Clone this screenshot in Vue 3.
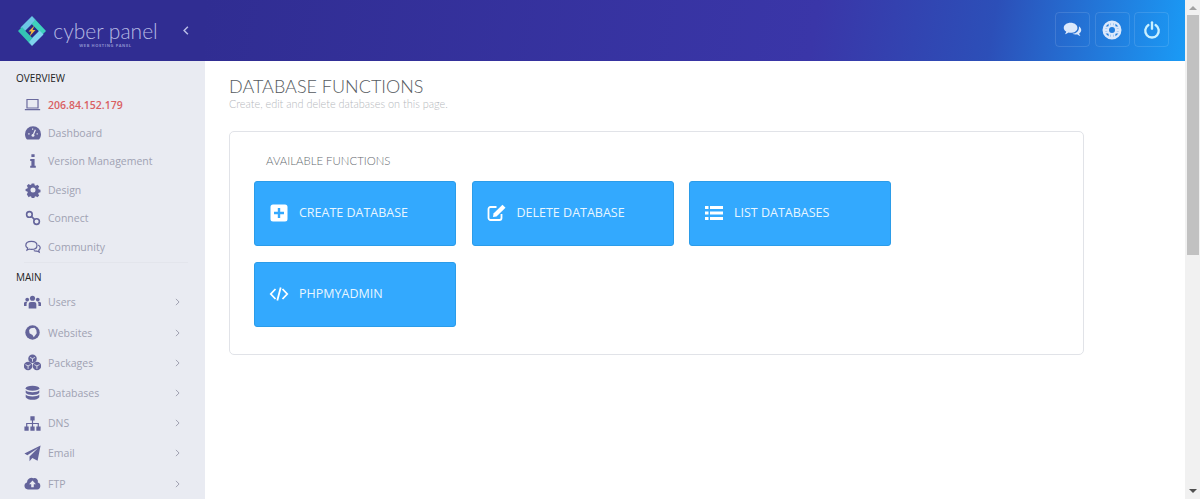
<script setup>
const overview = [
  { label: 'Dashboard', icon: 'gauge' },
  { label: 'Version Management', icon: 'info' },
  { label: 'Design', icon: 'cog' },
  { label: 'Connect', icon: 'link' },
  { label: 'Community', icon: 'comments' },
];
const mainMenu = [
  { label: 'Users', icon: 'users' },
  { label: 'Websites', icon: 'globe' },
  { label: 'Packages', icon: 'cubes' },
  { label: 'Databases', icon: 'database' },
  { label: 'DNS', icon: 'sitemap' },
  { label: 'Email', icon: 'plane' },
  { label: 'FTP', icon: 'cloud' },
];
const functions = [
  { label: 'CREATE DATABASE', icon: 'plus' },
  { label: 'DELETE DATABASE', icon: 'edit' },
  { label: 'LIST DATABASES', icon: 'list' },
  { label: 'PHPMYADMIN', icon: 'code' },
];
</script>

<template>
  <div class="page">
    <div class="app">
      <aside class="sidebar">
        <div class="logo-bar">
          <svg class="logo" viewBox="0 0 30 32" width="30" height="32">
            <path d="M15 1 3.500 12.500 7.500 16.500 15 9 18.500 5Z" fill="#6cc6e6" />
            <path d="M15 1 29 16 25 20 14.500 9 18 5Z" fill="#3fd0bd" />
            <path d="M15 31 26.500 19.500 22.500 15.500 15 23 11.500 27Z" fill="#7fd4ee" />
            <path d="M15 31 1 16 5 12 15.500 23 12 27Z" fill="#34c4b4" />
            <path d="M15 9.500 21.500 16 15 22.500 8.500 16Z" fill="#2a2a84" />
            <path d="M17.500 10.500 11.500 16.500H14.500L12.500 21.500 18.500 15H15.500Z" fill="#f3bb3e" />
          </svg>
          <div class="brand">
            <span class="brand-name">cyber panel</span>
            <span class="brand-sub">WEB HOSTING PANEL</span>
          </div>
          <svg class="collapse" viewBox="0 0 8 12" width="6" height="9">
            <path d="M6.500 1 1.500 6l5 5" fill="none" stroke="#b9bde6" stroke-width="2" />
          </svg>
        </div>

        <h6 class="section">OVERVIEW</h6>
        <a class="item ip">
          <span class="icon">
            <svg viewBox="0 0 20 16" width="17" height="14">
              <path d="M3.500 1.500h13v10h-13zM1 13.500h18" fill="none" stroke="#6a6a9e" stroke-width="1.400" />
            </svg>
          </span>
          <span class="ip-text">206.84.152.179</span>
        </a>
        <a v-for="row in overview" :key="row.label" class="item">
          <span class="icon">
            <svg viewBox="0 0 20 20" width="16" height="16" fill="#64649b">
              <template v-if="row.icon === 'gauge'">
                <path d="M10 1.500a10 10 0 0 0-10 10c0 2.500 1 5 2.500 6.500h15c1.500-1.500 2.500-4 2.500-6.500a10 10 0 0 0-10-10Z" />
                <path d="M10.500 12 13 6M4 11h1.800M14.500 11H16M9.500 4.500v1.500" stroke="#e9ebf2" stroke-width="1.500" />
                <circle cx="10" cy="13" r="1.800" fill="#e9ebf2" />
              </template>
              <template v-else-if="row.icon === 'info'">
                <path d="M8 1.500h4v3.500H8zM6.500 7.500H12V16h1.500v2.500h-7V16H8v-6H6.500z" />
              </template>
              <template v-else-if="row.icon === 'cog'">
                <path fill-rule="evenodd" d="M8.200 1h3.600l.5 2.500 1.600.7 2.200-1.400 2.500 2.500-1.400 2.200.7 1.600 2.500.5v3.600l-2.500.5-.7 1.600 1.400 2.200-2.500 2.500-2.200-1.400-1.600.7-.5 2.500H8.200l-.5-2.500-1.600-.7-2.200 1.400L1.400 15.800l1.400-2.200-.7-1.600L-.3 11.500V8.500l2.400-.5.7-1.600-1.400-2.200L3.900 1.700l2.200 1.400 1.600-.7ZM10 6.500a3.500 3.500 0 1 0 0 7 3.500 3.500 0 0 0 0-7Z" transform="translate(1 1) scale(.9)" />
              </template>
              <template v-else-if="row.icon === 'link'">
                <g fill="none" stroke="#64649b" stroke-width="2">
                  <circle cx="5.500" cy="5.500" r="3.500" />
                  <circle cx="14.500" cy="14.500" r="3.500" />
                  <path d="M8 8l4 4" />
                </g>
              </template>
              <template v-else-if="row.icon === 'comments'">
                <g fill="none" stroke="#64649b" stroke-width="1.500">
                  <path d="M8 3c4 0 7 2 7 5s-3 5-7 5c-1 0-2 0-2.800-.4L2.500 14l.8-2.800C1.800 10.300 1 9.200 1 8c0-3 3-5 7-5Z" />
                  <path d="M16.500 7.500C18.300 8.400 19 9.600 19 11c0 1.200-.7 2.200-1.800 3l.6 2.500-2.800-1.400c-1.500.2-3-.1-4-.8" />
                </g>
              </template>
            </svg>
          </span>
          <span class="item-label">{{ row.label }}</span>
        </a>
        <div class="divider"></div>

        <h6 class="section main-title">MAIN</h6>
        <a v-for="row in mainMenu" :key="row.label" class="item sub">
          <span class="icon">
            <svg viewBox="0 0 20 20" width="17" height="17" fill="#64649b">
              <template v-if="row.icon === 'users'">
                <circle cx="10" cy="5" r="3" />
                <circle cx="3.800" cy="6.500" r="2.200" />
                <circle cx="16.200" cy="6.500" r="2.200" />
                <path d="M5.500 17v-5c0-1.500 1-2.500 2.500-2.500h4c1.500 0 2.500 1 2.500 2.500v5zM0 14v-3c0-1 .8-2 2-2h2c-.8.800-1 1.800-1 3v2zM20 14v-3c0-1-.8-2-2-2h-2c.8.800 1 1.800 1 3v2z" />
              </template>
              <template v-else-if="row.icon === 'globe'">
                <circle cx="10" cy="10" r="8.500" />
                <path d="M8 5 12.500 4.500 14.500 7 15 11 11.500 15.500 10 13 6.500 11 6 7Z" fill="#e9ebf2" />
              </template>
              <template v-else-if="row.icon === 'cubes'">
                <circle cx="10" cy="5.500" r="5" />
                <circle cx="4.800" cy="14" r="5" />
                <circle cx="15.200" cy="14" r="5" />
                <path d="M7 4 10 5.500 13 4M10 5.500V9M1.800 12.500 4.800 14 7.800 12.500M4.800 14v3.500M12.200 12.500 15.200 14 18.200 12.500M15.200 14v3.500" stroke="#e9ebf2" stroke-width="1" fill="none" />
              </template>
              <template v-else-if="row.icon === 'database'">
                <ellipse cx="10" cy="3.800" rx="8" ry="3" />
                <path d="M2 6.200c1.500 1.600 4.500 2.300 8 2.300s6.500-.7 8-2.300v3c-1 1.800-4.500 2.600-8 2.600s-7-.8-8-2.600ZM2 11.200c1.500 1.600 4.500 2.300 8 2.300s6.500-.7 8-2.300v3.200c-1 2-4.500 3-8 3s-7-1-8-3Z" />
              </template>
              <template v-else-if="row.icon === 'sitemap'">
                <path d="M7.500 1.500h5v5h-5zM.5 13.500h5v5h-5zM7.500 13.500h5v5h-5zM14.500 13.500h5v5h-5z" />
                <path d="M9.300 6h1.400v3.300h6.800v4.700h-1.400v-3.300h-5.400V14H9.300v-3.300H3.900V14H2.500V9.300h6.800Z" />
              </template>
              <template v-else-if="row.icon === 'plane'">
                <path d="M19.500 .5 16 18.500l-6.200-3.200-3.300 3.700v-5.500L16.500 3.500 4 12 .5 10Z" />
              </template>
              <template v-else-if="row.icon === 'cloud'">
                <path fill-rule="evenodd" d="M16.200 8.800A4 4 0 0 0 11 3.700 5.500 5.500 0 0 0 3.500 8.500v.3A4.200 4.200 0 0 0 4.500 17h11a4.200 4.200 0 0 0 .7-8.200ZM10 6.500l4 4.500h-2.500v3.500h-3V11H6Z" />
              </template>
            </svg>
          </span>
          <span class="item-label">{{ row.label }}</span>
          <svg class="chevron" viewBox="0 0 8 12" width="5" height="8">
            <path d="M1.500 1l5 5-5 5" fill="none" stroke="#9a9cad" stroke-width="1.500" />
          </svg>
        </a>
      </aside>

      <div class="content">
        <header class="topbar">
          <button class="top-btn">
            <svg viewBox="0 0 20 20" width="19" height="19" fill="#dbe8fb">
              <path d="M8 3c4 0 7.200 2.300 7.200 5.300S12 13.500 8 13.500c-.8 0-1.500-.1-2.200-.3C4.800 14 3.500 14.800 2 15c.7-.8 1.200-1.700 1.400-2.800C1.800 11.200.8 9.800.8 8.300.8 5.300 4 3 8 3Z" />
              <path d="M16.600 6.500c1.600 1 2.600 2.400 2.600 4 0 1.500-.8 2.800-2.200 3.700.2 1 .7 1.900 1.300 2.600-1.300-.2-2.600-.9-3.500-1.700-1.700.4-3.400.1-5-.7 4.200-.2 7.500-2.800 7-7.900Z" />
            </svg>
          </button>
          <button class="top-btn">
            <svg viewBox="0 0 20 20" width="20" height="20" fill="none" stroke="#dbe8fb">
              <circle cx="10" cy="10" r="8.300" stroke-width="2.400" />
              <circle cx="10" cy="10" r="4" stroke-width="2" />
              <path d="M7.500 2v5M12.500 2v5M7.500 13v5M12.500 13v5M2 7.500h5M2 12.500h5M13 7.500h5M13 12.500h5" stroke-width="1.800" />
              <path d="M8.500 2.500h3v4h-3zM8.500 13.500h3v4h-3zM2.500 8.500h4v3h-4zM13.500 8.500h4v3h-4z" fill="#dbe8fb" stroke="none" />
            </svg>
          </button>
          <button class="top-btn">
            <svg viewBox="0 0 20 20" width="18" height="18" fill="none" stroke="#c9f0ff" stroke-width="2.600" stroke-linecap="round">
              <path d="M6 4.500a7.500 7.500 0 1 0 8 0" />
              <path d="M10 1.500v7" />
            </svg>
          </button>
        </header>

        <main class="body">
          <h2 class="title">DATABASE FUNCTIONS</h2>
          <p class="subtitle">Create, edit and delete databases on this page.</p>

          <section class="panel">
            <h3 class="panel-title">AVAILABLE FUNCTIONS</h3>
            <div class="tiles">
              <a v-for="fn in functions" :key="fn.label" class="tile">
                <svg class="tile-icon" viewBox="0 0 20 20" width="20" height="20" fill="#fff">
                  <template v-if="fn.icon === 'plus'">
                    <path fill-rule="evenodd" d="M4 1.500h12A2.500 2.500 0 0 1 18.500 4v12a2.500 2.500 0 0 1-2.500 2.500H4A2.500 2.500 0 0 1 1.500 16V4A2.500 2.500 0 0 1 4 1.500Zm4.800 3.500v3.800H5v2.400h3.800V15h2.400v-3.800H15V8.800h-3.800V5Z" />
                  </template>
                  <template v-else-if="fn.icon === 'edit'">
                    <path d="M14.500 11v4A2 2 0 0 1 12.500 17H3.500A2 2 0 0 1 1.500 15V6A2 2 0 0 1 3.500 4h6" fill="none" stroke="#fff" stroke-width="1.800" />
                    <path d="M6.500 10.500 15.500 1.800l3 3-9 8.700-3.500.5Z" />
                  </template>
                  <template v-else-if="fn.icon === 'list'">
                    <path d="M1 3h3.500v3H1zM6 3h13v3H6zM1 8.500h3.500v3H1zM6 8.500h13v3H6zM1 14h3.500v3H1zM6 14h13v3H6z" />
                  </template>
                  <template v-else>
                    <path d="M6.500 5 1.800 10l4.700 5M13.500 5l4.700 5-4.700 5M11.700 3.500 8.300 16.500" fill="none" stroke="#fff" stroke-width="1.800" />
                  </template>
                </svg>
                <span>{{ fn.label }}</span>
              </a>
            </div>
          </section>
        </main>
      </div>
    </div>

    <div class="scrollbar">
      <span class="arrow"></span>
      <span class="thumb"></span>
      <span class="arrow-down"></span>
    </div>
  </div>
</template>

<style>
html, body {
  margin: 0;
  overflow: hidden;
  background: #fff;
}
</style>

<style scoped>
.page {
  display: flex;
  height: 499px;
  overflow: hidden;
  font-family: "Open Sans", "Liberation Sans", sans-serif;
}

.app {
  flex: 1;
  display: flex;
  min-width: 0;
}

.sidebar {
  width: 205px;
  flex: none;
  background: #e9ebf2;
  display: flex;
  flex-direction: column;
}

.logo-bar {
  height: 61px;
  flex: none;
  background: #302d92;
  display: flex;
  align-items: center;
  padding-left: 17px;
  box-sizing: border-box;
}

.logo {
  margin-right: 6px;
  flex: none;
}

.brand {
  display: flex;
  flex-direction: column;
  align-items: center;
  width: 105px;
  padding-top: 6px;
}

.brand-name {
  font-family: "Lato", sans-serif;
  font-weight: 300;
  font-size: 21px;
  line-height: 24px;
  color: #b6bae2;
  white-space: nowrap;
}

.brand-sub {
  font-size: 4px;
  line-height: 6px;
  letter-spacing: .6px;
  color: #8d90cf;
  font-weight: 700;
}

.collapse {
  margin-left: 25px;
}

.section {
  margin: 0;
  padding-left: 16px;
  font-size: 10px;
  font-weight: 400;
  line-height: 14px;
  color: #222;
  padding-top: 10px;
  padding-bottom: 5.500px;
}

.main-title {
  padding-top: 7px;
  padding-bottom: 3.500px;
}

.item {
  height: 28.400px;
  flex: none;
  display: flex;
  align-items: center;
  font-size: 10.500px;
  color: #a0a2b3;
  padding-right: 25px;
}

.item.sub {
  height: 30.200px;
}

.icon {
  width: 17px;
  margin-left: 24px;
  margin-right: 7px;
  display: flex;
  justify-content: center;
  flex: none;
}

.item-label {
  flex: 1;
  white-space: nowrap;
}

.ip-text {
  color: #d95f62;
  font-weight: 600;
}

.divider {
  height: 1px;
  margin: 1px 17px 0 24px;
  background: #e3e5ec;
}

.content {
  flex: 1;
  display: flex;
  flex-direction: column;
  min-width: 0;
}

.topbar {
  height: 61px;
  flex: none;
  background: linear-gradient(100deg, #302d92 0%, #3a36a8 62%, #2c4fb8 80%, #1a9bf6 100%);
  display: flex;
  justify-content: flex-end;
  align-items: center;
  gap: 4.500px;
  padding-right: 16px;
  padding-bottom: 2px;
  box-sizing: border-box;
}

.top-btn {
  width: 35px;
  height: 35px;
  padding: 0;
  border: 1px solid rgba(255, 255, 255, .12);
  border-radius: 4px;
  background: transparent;
  display: flex;
  align-items: center;
  justify-content: center;
}

.body {
  padding: 14px 0 0 24px;
}

.title {
  margin: 0;
  font-family: "Lato", sans-serif;
  font-weight: 300;
  font-size: 18px;
  line-height: 22px;
  color: #555a60;
}

.subtitle {
  margin: 0;
  font-family: "Lato", sans-serif;
  font-weight: 300;
  font-size: 10.900px;
  line-height: 13px;
  color: #b5b8bd;
}

.panel {
  width: 855px;
  height: 224px;
  box-sizing: border-box;
  margin-top: 21px;
  border: 1px solid #e1e3e8;
  border-radius: 5px;
  padding: 22px 24px 0;
  background: #fff;
}

.panel-title {
  margin: 0 0 13px 12px;
  font-family: "Lato", sans-serif;
  font-weight: 300;
  font-size: 11.400px;
  line-height: 14px;
  color: #666a70;
}

.tiles {
  display: flex;
  flex-wrap: wrap;
  gap: 16px 15.500px;
  width: 660px;
}

.tile {
  width: 202px;
  height: 65px;
  box-sizing: border-box;
  background: #33a9fe;
  border: 1px solid #2b9ce9;
  border-radius: 3px;
  display: flex;
  align-items: center;
  padding-left: 14px;
  padding-bottom: 2px;
  font-size: 12.500px;
  font-weight: 400;
  color: #e8f6ff;
}

.tile-icon {
  margin-right: 10px;
  flex: none;
}

.scrollbar {
  width: 15px;
  flex: none;
  background: #f1f1f1;
  display: flex;
  flex-direction: column;
  align-items: center;
}

.arrow {
  margin-top: 6px;
  margin-bottom: 5px;
  width: 0;
  height: 0;
  border-left: 4px solid transparent;
  border-right: 4px solid transparent;
  border-bottom: 4px solid #a3a3a3;
}

.thumb {
  width: 12px;
  height: 240px;
  background: #c1c1c1;
}

.arrow-down {
  margin-top: auto;
  margin-bottom: 6px;
  width: 0;
  height: 0;
  border-left: 4px solid transparent;
  border-right: 4px solid transparent;
  border-top: 4px solid #505050;
}
</style>
